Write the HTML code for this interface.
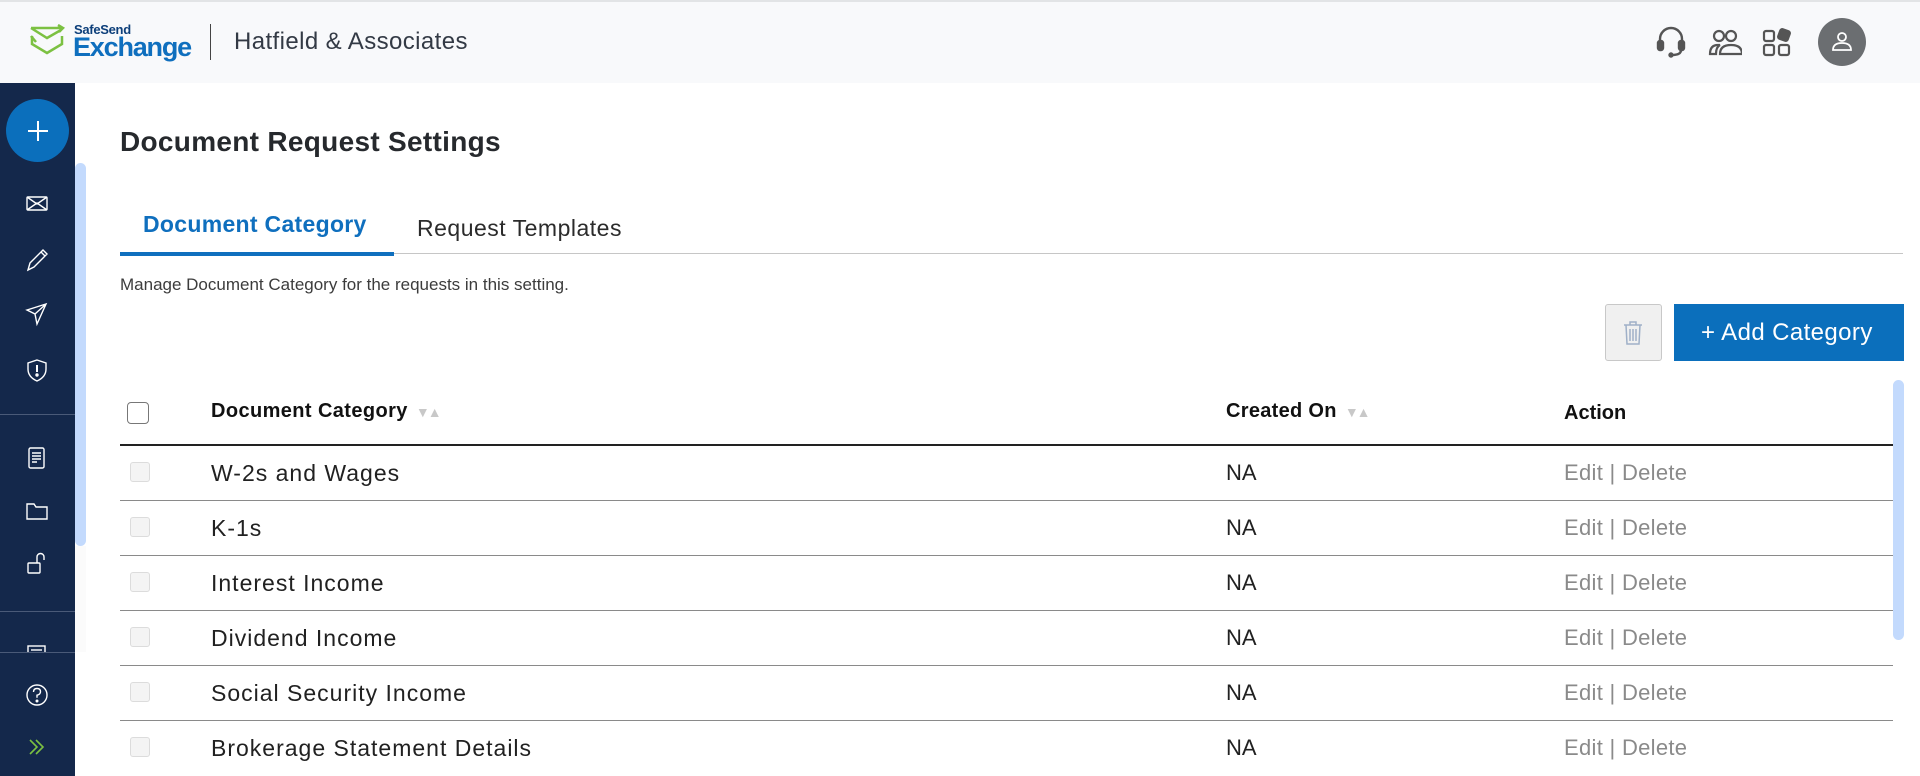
<!DOCTYPE html>
<html><head><meta charset="utf-8">
<style>
*{margin:0;padding:0;box-sizing:border-box}
body{width:1920px;height:776px;overflow:hidden;background:#fff;font-family:"Liberation Sans",sans-serif;position:relative;color:#212529}
.hdr{position:absolute;left:0;top:0;width:1920px;height:83px;background:#f8f9fb;border-top:2px solid #e2e4e6}
.side{position:absolute;left:0;top:83px;width:75px;height:693px;background:#14284b}
.abs{position:absolute}
.hl{position:absolute;left:0;width:75px;height:1px;background:#4a5a78}
.sb{position:absolute;left:75px;top:163px;width:11px;height:383px;background:#c3dafd;border-radius:6px}
.txt{position:absolute;white-space:nowrap}
.row{position:absolute;left:120px;width:1773px;height:1px;background:#8a8a8a}
.cb{position:absolute;left:130px;width:20px;height:20px;border:1px solid #dcdcdc;background:#f4f4f4;border-radius:3px}
.c1{position:absolute;left:211px;font-size:23px;letter-spacing:1px;color:#212121}
.c2{position:absolute;left:1226px;font-size:22px;color:#212121}
.c3{position:absolute;left:1564px;font-size:22px;color:#8a8a8a;letter-spacing:0.3px}
.arr{display:inline-block;margin-left:8px;font-size:14px;color:#c8c8c8;vertical-align:middle;letter-spacing:-2px}
</style></head><body>
<div class="hdr"></div>
<svg class="abs" style="left:28px;top:24px" width="38" height="32" viewBox="0 0 38 32" fill="none" stroke="#7cc142" stroke-width="2.5"><path d="M3 4 L35 4 M3 4 L19 14 L33 6"/><path d="M30 1 L35 4 L31 8"/><path d="M4 12 L4 20 L19 29 L34 20 L34 12"/><path d="M3 12 L8 18"/></svg>
<div class="txt" style="left:74px;top:22px;font-size:13px;font-weight:bold;color:#0d3f7a;letter-spacing:-0.3px">SafeSend</div>
<div class="txt" style="left:73px;top:32px;font-size:27px;font-weight:bold;color:#0f6fbe;letter-spacing:-1.2px">Exchange</div>
<div class="abs" style="left:210px;top:24px;width:1px;height:36px;background:#444"></div>
<div class="txt" style="left:234px;top:28px;font-size:24px;color:#333a45;letter-spacing:0.4px">Hatfield &amp; Associates</div>
<svg class="abs" style="left:1656px;top:26px" width="30" height="32" viewBox="0 0 30 32" fill="none" stroke="#555" stroke-width="2.4"><path d="M4 16 V13 a11 11 0 0 1 22 0 V16"/><rect x="2" y="15" width="5" height="9" rx="2" fill="#555"/><rect x="23" y="15" width="5" height="9" rx="2" fill="#555"/><path d="M25 24 q0 5 -9 5"/><circle cx="15" cy="29" r="1.5" fill="#555"/></svg>
<svg class="abs" style="left:1708px;top:28px" width="34" height="28" viewBox="0 0 34 28" fill="none" stroke="#555" stroke-width="2.2"><circle cx="11" cy="8" r="5"/><circle cx="23" cy="8" r="5"/><path d="M2 26 q0-9 8-9 h2 q-4 2 -4 9 Z"/><path d="M12 26 q0-9 11-9 q11 0 11 9 Z"/></svg>
<svg class="abs" style="left:1762px;top:28px" width="32" height="30" viewBox="0 0 32 30" fill="none" stroke="#555" stroke-width="2.2"><rect x="2" y="3" width="10" height="10" rx="2"/><rect x="2" y="17" width="10" height="10" rx="2"/><rect x="17" y="17" width="10" height="10" rx="2"/><rect x="17" y="2" width="10" height="10" rx="2" fill="#555" transform="rotate(20 22 7)"/></svg>
<div class="abs" style="left:1818px;top:18px;width:48px;height:48px;border-radius:50%;background:#6b6e71"></div>
<svg class="abs" style="left:1830px;top:30px" width="24" height="24" viewBox="0 0 24 24" fill="none" stroke="#fff" stroke-width="1.8"><circle cx="12" cy="7" r="4"/><path d="M3 20 q0-7 9-7 q9 0 9 7 Z"/></svg>
<div class="side"></div>
<div class="abs" style="left:6px;top:99px;width:63px;height:63px;border-radius:50%;background:#0b6fbc"></div>
<svg class="abs" style="left:26px;top:119px" width="24" height="24" viewBox="0 0 24 24" stroke="#fff" stroke-width="2"><path d="M12 2 V22 M2 12 H22"/></svg>
<div class="sb"></div>
<div class="abs" style="left:75px;top:546px;width:11px;height:106px;background:#fbfbfb"></div>
<svg class="abs" style="left:0;top:180px" width="75" height="520" viewBox="0 0 75 520" fill="none" stroke="#fff" stroke-width="1.4">
<rect x="27" y="17" width="20" height="13" rx="1"/><path d="M27 17 L37 24 L47 17 M27 30 L37 23 L47 30"/>
<path d="M28 90 L30 83 L43 70 L47 74 L34 87 Z M41 72 L45 76"/>
<path d="M27 130 L46 124 L37 144 L35 134 Z M35 134 L46 124"/>
<path d="M37 180 l9 3 v6 q0 8 -9 12 q-9 -4 -9 -12 v-6 Z"/><path d="M37 185 v7" stroke-width="2"/><circle cx="37" cy="195" r="1" fill="#fff"/>
<rect x="29" y="268" width="15" height="20" rx="1.5"/><path d="M32 273 h9 M32 276 h9 M32 279 h9 M32 282 h5"/>
<path d="M27 324 h7 l2 3 h11 v12 h-20 Z"/>
<rect x="28" y="383" width="12" height="10" rx="1"/><path d="M37 383 v-6 a3.5 3.5 0 0 1 7 0 v3"/>
<rect x="28" y="466" width="17" height="12"/><path d="M31 470 h11"/>
</svg>
<div class="hl" style="top:414px"></div>
<div class="hl" style="top:611px"></div>
<div class="abs" style="left:0;top:652px;width:75px;height:124px;background:#14284b;border-top:1px solid #4a5a78"></div>
<svg class="abs" style="left:0;top:600px" width="75" height="176" viewBox="0 0 75 176" fill="none" stroke="#fff" stroke-width="1.4">
<circle cx="37" cy="95" r="10"/><path d="M33.5 92 q0-3.5 3.5-3.5 q3.5 0 3.5 3.2 q0 2.5-3.5 3.5 v2.5"/><circle cx="37" cy="101" r="0.8" fill="#fff"/>
<path d="M30 140 l7 7 l-7 7 M36 140 l7 7 l-7 7" stroke="#7cc142" stroke-width="1.6"/>
</svg>
<div class="txt" style="left:120px;top:126px;font-size:28px;font-weight:bold;color:#26292d;letter-spacing:0.3px">Document Request Settings</div>
<div class="txt" style="left:143px;top:211px;font-size:23px;font-weight:bold;color:#0f6fbe;letter-spacing:0.3px">Document Category</div>
<div class="txt" style="left:417px;top:215px;font-size:23px;color:#2b2b2b;letter-spacing:0.5px">Request Templates</div>
<div class="abs" style="left:120px;top:253px;width:1783px;height:1px;background:#c6c6c6"></div>
<div class="abs" style="left:120px;top:252px;width:274px;height:4px;background:#0f6fbe"></div>
<div class="txt" style="left:120px;top:275px;font-size:17px;color:#3c3c3c">Manage Document Category for the requests in this setting.</div>
<div class="abs" style="left:1605px;top:304px;width:57px;height:57px;background:#f0f0f0;border:1px solid #c8c8c8;border-radius:3px"></div>
<svg class="abs" style="left:1622px;top:320px" width="22" height="26" viewBox="0 0 22 26" fill="none" stroke="#9fb0c8" stroke-width="1.5"><path d="M2 5 h18 M8 5 V2 h6 v3 M4 5 l1 19 h12 l1-19 M8 9 v12 M11 9 v12 M14 9 v12"/></svg>
<div class="abs" style="left:1674px;top:304px;width:230px;height:57px;background:#0b6fbc"></div>
<div class="txt" style="left:1701px;top:319px;font-size:24px;color:#fff;letter-spacing:0.4px">+ Add Category</div>
<div class="abs" style="left:127px;top:402px;width:22px;height:22px;border:1.5px solid #777;border-radius:4px;background:#fff"></div>
<div class="txt" style="left:211px;top:400px;font-size:20px;font-weight:bold;color:#111;letter-spacing:0.4px">Document Category<span class="arr">▼▲</span></div>
<div class="txt" style="left:1226px;top:400px;font-size:20px;font-weight:bold;color:#111;letter-spacing:0.3px">Created On<span class="arr">▼▲</span></div>
<div class="txt" style="left:1564px;top:402px;font-size:20px;font-weight:bold;color:#111">Action</div>
<div class="abs" style="left:120px;top:444px;width:1773px;height:2px;background:#222"></div>
<div class="abs" style="left:1893px;top:380px;width:11px;height:260px;background:#c3dafd;border-radius:6px"></div>

<div class="cb" style="top:462px"></div><div class="c1 txt" style="top:460px">W-2s and Wages</div><div class="c2 txt" style="top:460px">NA</div><div class="c3 txt" style="top:460px">Edit | Delete</div>
<div class="row" style="top:500px"></div>
<div class="cb" style="top:517px"></div><div class="c1 txt" style="top:515px">K-1s</div><div class="c2 txt" style="top:515px">NA</div><div class="c3 txt" style="top:515px">Edit | Delete</div>
<div class="row" style="top:555px"></div>
<div class="cb" style="top:572px"></div><div class="c1 txt" style="top:570px">Interest Income</div><div class="c2 txt" style="top:570px">NA</div><div class="c3 txt" style="top:570px">Edit | Delete</div>
<div class="row" style="top:610px"></div>
<div class="cb" style="top:627px"></div><div class="c1 txt" style="top:625px">Dividend Income</div><div class="c2 txt" style="top:625px">NA</div><div class="c3 txt" style="top:625px">Edit | Delete</div>
<div class="row" style="top:665px"></div>
<div class="cb" style="top:682px"></div><div class="c1 txt" style="top:680px">Social Security Income</div><div class="c2 txt" style="top:680px">NA</div><div class="c3 txt" style="top:680px">Edit | Delete</div>
<div class="row" style="top:720px"></div>
<div class="cb" style="top:737px"></div><div class="c1 txt" style="top:735px">Brokerage Statement Details</div><div class="c2 txt" style="top:735px">NA</div><div class="c3 txt" style="top:735px">Edit | Delete</div>
</body></html>
